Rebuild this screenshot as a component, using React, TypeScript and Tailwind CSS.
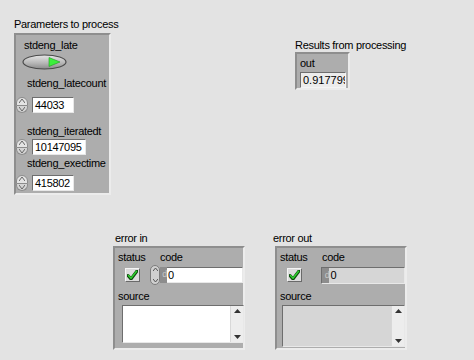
import React from "react";

const font = { fontFamily: '"Liberation Sans", Arial, sans-serif', letterSpacing: "-0.3px" };

function Spinner() {
  return (
    <div className="flex flex-col w-[12px] h-[16px] mr-[4px]">
      <div className="flex-1 rounded-t-[6px] bg-[#e4e4e4] border border-[#8c8c8c] flex items-center justify-center">
        <svg width="6" height="4" viewBox="0 0 6 4"><path d="M0 4 L3 0 L6 4" fill="none" stroke="#666" strokeWidth="1" /></svg>
      </div>
      <div className="flex-1 rounded-b-[6px] bg-[#d4d4d4] border border-t-0 border-[#8c8c8c] flex items-center justify-center">
        <svg width="6" height="4" viewBox="0 0 6 4"><path d="M0 0 L3 4 L6 0" fill="none" stroke="#666" strokeWidth="1" /></svg>
      </div>
    </div>
  );
}

function NumBox({ value, width }: { value: string; width: number }) {
  return (
    <div
      className="h-[16px] bg-white border border-t-[#6e6e6e] border-l-[#6e6e6e] border-b-[#e8e8e8] border-r-[#e8e8e8] text-[11px] leading-[14px] pl-[2px] text-black overflow-hidden whitespace-nowrap"
      style={{ width }}
    >
      {value}
    </div>
  );
}

function NumControl({ value, width }: { value: string; width: number }) {
  return (
    <div className="flex items-center">
      <Spinner />
      <NumBox value={value} width={width} />
    </div>
  );
}

function Check() {
  return (
    <div className="w-[15px] h-[14px] bg-[#dcdcdc] border border-t-[#f4f4f4] border-l-[#f4f4f4] border-b-[#6a6a6a] border-r-[#6a6a6a] flex items-center justify-center">
      <svg width="11" height="10" viewBox="0 0 11 10">
        <path d="M1 5.5 L4 9 L10 1" fill="none" stroke="#0c4a0c" strokeWidth="3" strokeLinejoin="round" strokeLinecap="round" />
        <path d="M1.5 5.5 L4 8.2 L9.5 1.3" fill="none" stroke="#2fd12f" strokeWidth="1.4" strokeLinejoin="round" strokeLinecap="round" />
      </svg>
    </div>
  );
}

function ScrollArea({ bg, w, h }: { bg: string; w: number; h: number }) {
  return (
    <div
      className="flex border border-t-[#6e6e6e] border-l-[#6e6e6e] border-b-[#e8e8e8] border-r-[#e8e8e8]"
      style={{ width: w, height: h, background: bg }}
    >
      <div className="flex-1" />
      <div className="w-[13px] h-full bg-[#ededed] border-l border-[#d8d8d8] flex flex-col justify-between items-center py-[3px]">
        <svg width="7" height="4" viewBox="0 0 7 4"><path d="M0 4 L3.5 0 L7 4 Z" fill="#333" /></svg>
        <svg width="7" height="4" viewBox="0 0 7 4"><path d="M0 0 L3.5 4 L7 0 Z" fill="#333" /></svg>
      </div>
    </div>
  );
}

function Cluster({ children, className }: { children: React.ReactNode; className?: string }) {
  return (
    <div
      className={"bg-[#adadad] border-2 border-t-[#8e8e8e] border-l-[#8e8e8e] border-b-[#ececec] border-r-[#ececec] " + (className || "")}
    >
      {children}
    </div>
  );
}

function ErrorCluster({ out }: { out?: boolean }) {
  return (
    <Cluster className="w-[132px] h-[104px] flex flex-col pl-[3px] pt-[3px]">
      <div className="flex text-[11px] leading-[12px] text-black">
        <span className="w-[42px]">status</span>
        <span>code</span>
      </div>
      <div className="flex items-center mt-[3px] h-[18px]">
        <div className="w-[42px] flex pl-[7px]">
          <Check />
        </div>
        {out ? (
          <div className="flex h-[17px] w-[85px] bg-[#d6d6d6] border border-t-[#6e6e6e] border-l-[#6e6e6e] border-b-[#e8e8e8] border-r-[#e8e8e8]">
            <div className="w-[7px] h-full bg-[#8d8d8d] text-[9px] leading-[15px] text-[#c8c8c8] text-right">d</div>
            <div className="text-[11px] leading-[15px] pl-[1px] text-black">0</div>
          </div>
        ) : (
          <div className="flex items-center -ml-[10px]">
            <div className="w-[10px] h-[20px] rounded-[5px] bg-[#d0d0d0] border border-[#7c7c7c] flex flex-col items-center justify-between py-[2px]">
              <svg width="5" height="3" viewBox="0 0 5 3"><path d="M0 3 L2.5 0 L5 3" fill="none" stroke="#555" strokeWidth="1" /></svg>
              <svg width="5" height="3" viewBox="0 0 5 3"><path d="M0 0 L2.5 3 L5 0" fill="none" stroke="#555" strokeWidth="1" /></svg>
            </div>
            <div className="flex h-[16px] w-[83px]">
              <div className="w-[7px] h-full bg-[#8d8d8d] text-[9px] leading-[15px] text-[#c8c8c8] text-right">d</div>
              <div className="flex-1 bg-white border border-t-[#6e6e6e] border-b-[#e8e8e8] border-r-[#e8e8e8] border-l-0 text-[11px] leading-[14px] pl-[1px] text-black">0</div>
            </div>
          </div>
        )}
      </div>
      <div className="text-[11px] leading-[12px] text-black mt-[6px]">source</div>
      <div className={out ? "mt-[3px] ml-[2px]" : "mt-[3px] ml-[4px]"}>
        <ScrollArea bg={out ? "#d6d6d6" : "#ffffff"} w={out ? 123 : 122} h={out ? 42 : 38} />
      </div>
    </Cluster>
  );
}

export default function App() {
  return (
    <div className="relative w-[474px] h-[360px] bg-[#e3e3e3] overflow-hidden text-black" style={font}>
      {/* Parameters to process */}
      <div className="absolute left-[14px] top-[18px] flex flex-col">
        <div className="text-[11px] leading-[12px] h-[15px] whitespace-nowrap">Parameters to process</div>
        <Cluster className="w-[97px] h-[162px] flex flex-col">
          <div className="text-[11px] leading-[12px] ml-[8px] mt-[4px] whitespace-nowrap">stdeng_late</div>
          <div className="ml-[6px] mt-[3px] h-[16px]">
            <svg width="45" height="16" viewBox="0 0 45 16" className="block">
              <defs>
                <linearGradient id="ov" x1="0" y1="0" x2="0" y2="1">
                  <stop offset="0" stopColor="#e6e6e6" />
                  <stop offset="0.6" stopColor="#b4b4b4" />
                  <stop offset="1" stopColor="#8a8a8a" />
                </linearGradient>
              </defs>
              <ellipse cx="22.5" cy="8" rx="21.5" ry="7" fill="url(#ov)" stroke="#4a4a4a" strokeWidth="1.2" />
              <path d="M27 3.5 L38 8 L27 12.5 Z" fill="#3cf03c" stroke="#1f9a1f" strokeWidth="0.6" />
            </svg>
          </div>
          <div className="text-[11px] leading-[12px] ml-[11px] mt-[7px] whitespace-nowrap">stdeng_latecount</div>
          <div className="mt-[8px]">
            <NumControl value="44033" width={42} />
          </div>
          <div className="text-[11px] leading-[12px] ml-[11px] mt-[12px] whitespace-nowrap">stdeng_iteratedt</div>
          <div className="mt-[2px]">
            <NumControl value="10147095" width={54} />
          </div>
          <div className="text-[11px] leading-[12px] ml-[11px] mt-[2px] whitespace-nowrap">stdeng_exectime</div>
          <div className="mt-[6px]">
            <NumControl value="415802" width={42} />
          </div>
        </Cluster>
      </div>

      {/* Results */}
      <div className="absolute left-[295px] top-[39px] flex flex-col">
        <div className="text-[11px] leading-[12px] h-[13px] whitespace-nowrap">Results from processing</div>
        <Cluster className="w-[55px] h-[38px] flex flex-col pl-[3px]">
          <div className="text-[11px] leading-[12px] mt-[3px]">out</div>
          <div className="mt-[3px] w-[46px] h-[16px] bg-[#ececec] border border-t-[#6e6e6e] border-l-[#6e6e6e] border-b-[#f4f4f4] border-r-[#f4f4f4] text-[11px] leading-[14px] pl-[2px] overflow-hidden whitespace-nowrap">
            <span className="tracking-[0px]">0.917799</span>
          </div>
        </Cluster>
      </div>

      {/* error in */}
      <div className="absolute left-[113px] top-[232px] flex flex-col">
        <div className="text-[11px] leading-[12px] h-[14px] ml-[2px]">error in</div>
        <ErrorCluster />
      </div>

      {/* error out */}
      <div className="absolute left-[275px] top-[232px] flex flex-col">
        <div className="text-[11px] leading-[12px] h-[14px] -ml-[2px]">error out</div>
        <ErrorCluster out />
      </div>
    </div>
  );
}
